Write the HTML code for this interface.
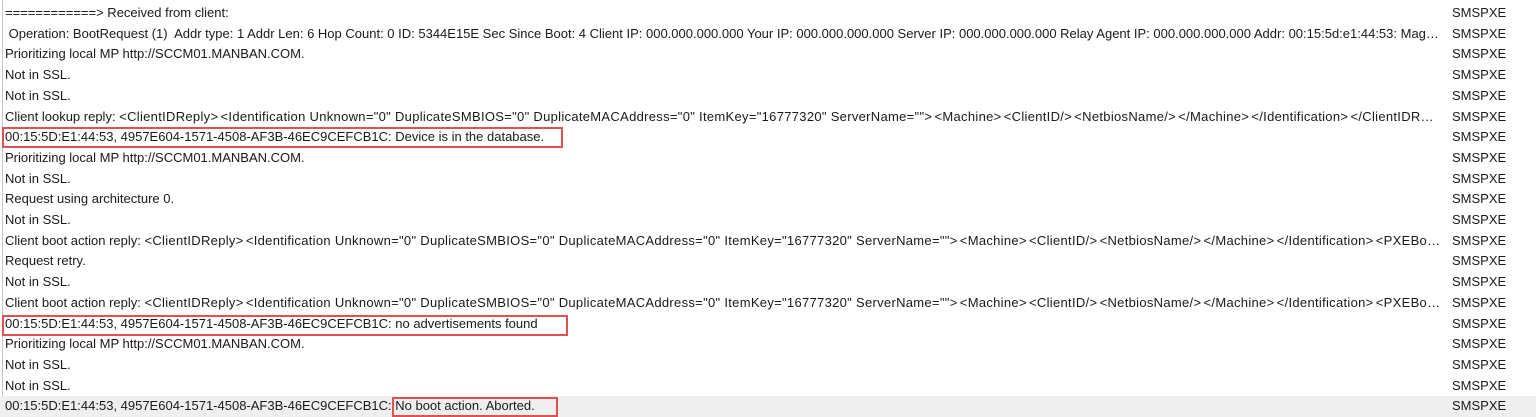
<!DOCTYPE html>
<html><head><meta charset="utf-8"><style>
body{margin:0;width:1536px;height:415px;background:#fff;overflow:hidden;position:relative;font-family:"Liberation Sans",sans-serif;font-size:13px;color:#1a1a1a}
.vl{position:absolute;left:2px;top:0;width:1px;height:415px;background:#c8c8c8}
.r{position:absolute;left:0;width:1536px;height:20.7px;line-height:20.7px;white-space:nowrap}
.t{position:absolute;left:5px;width:1436px;overflow:hidden;text-overflow:ellipsis}
.c{position:absolute;left:1452px}
.x{letter-spacing:0.3px}
.b{letter-spacing:2.5px}
.sel{background:#efefef}
.box{position:absolute;border:2px solid #e05252;box-sizing:border-box}
</style></head><body>
<div class="vl"></div>
<div class="r" style="top:3px"><span class="t">============&gt; Received from client:</span><span class="c">SMSPXE</span></div>
<div class="r" style="top:23.7px"><span class="t">&nbsp;Operation: BootRequest (1)&nbsp; Addr type: 1 Addr Len: 6 Hop Count: 0 ID: 5344E15E Sec Since Boot: 4 Client IP: 000.000.000.000 Your IP: 000.000.000.000 Server IP: 000.000.000.000 Relay Agent IP: 000.000.000.000 Addr: 00:15:5d:e1:44:53: Magic Cookie: 63825363</span><span class="c">SMSPXE</span></div>
<div class="r" style="top:44.4px"><span class="t">Prioritizing local MP http://SCCM01.MANBAN.COM.</span><span class="c">SMSPXE</span></div>
<div class="r" style="top:65.1px"><span class="t">Not in SSL.</span><span class="c">SMSPXE</span></div>
<div class="r" style="top:85.8px"><span class="t">Not in SSL.</span><span class="c">SMSPXE</span></div>
<div class="r" style="top:106.5px"><span class="t">Client lookup reply: <span class="x">&lt;ClientIDReply<span class="b">&gt;</span>&lt;Identification Unknown="0" DuplicateSMBIOS="0" DuplicateMACAddress="0" ItemKey="16777320" ServerName=""<span class="b">&gt;</span>&lt;Machine<span class="b">&gt;</span>&lt;ClientID/<span class="b">&gt;</span>&lt;NetbiosName/<span class="b">&gt;</span>&lt;/Machine<span class="b">&gt;</span>&lt;/Identification<span class="b">&gt;</span>&lt;/ClientIDReply&gt;</span></span><span class="c">SMSPXE</span></div>
<div class="r" style="top:127.2px"><span class="t">00:15:5D:E1:44:53, 4957E604-1571-4508-AF3B-46EC9CEFCB1C: Device is in the database.</span><span class="c">SMSPXE</span></div>
<div class="r" style="top:147.9px"><span class="t">Prioritizing local MP http://SCCM01.MANBAN.COM.</span><span class="c">SMSPXE</span></div>
<div class="r" style="top:168.6px"><span class="t">Not in SSL.</span><span class="c">SMSPXE</span></div>
<div class="r" style="top:189.3px"><span class="t">Request using architecture 0.</span><span class="c">SMSPXE</span></div>
<div class="r" style="top:210px"><span class="t">Not in SSL.</span><span class="c">SMSPXE</span></div>
<div class="r" style="top:230.7px"><span class="t">Client boot action reply: <span class="x">&lt;ClientIDReply<span class="b">&gt;</span>&lt;Identification Unknown="0" DuplicateSMBIOS="0" DuplicateMACAddress="0" ItemKey="16777320" ServerName=""<span class="b">&gt;</span>&lt;Machine<span class="b">&gt;</span>&lt;ClientID/<span class="b">&gt;</span>&lt;NetbiosName/<span class="b">&gt;</span>&lt;/Machine<span class="b">&gt;</span>&lt;/Identification<span class="b">&gt;</span>&lt;PXEBootAction&gt;</span></span><span class="c">SMSPXE</span></div>
<div class="r" style="top:251.4px"><span class="t">Request retry.</span><span class="c">SMSPXE</span></div>
<div class="r" style="top:272.1px"><span class="t">Not in SSL.</span><span class="c">SMSPXE</span></div>
<div class="r" style="top:292.8px"><span class="t">Client boot action reply: <span class="x">&lt;ClientIDReply<span class="b">&gt;</span>&lt;Identification Unknown="0" DuplicateSMBIOS="0" DuplicateMACAddress="0" ItemKey="16777320" ServerName=""<span class="b">&gt;</span>&lt;Machine<span class="b">&gt;</span>&lt;ClientID/<span class="b">&gt;</span>&lt;NetbiosName/<span class="b">&gt;</span>&lt;/Machine<span class="b">&gt;</span>&lt;/Identification<span class="b">&gt;</span>&lt;PXEBootAction&gt;</span></span><span class="c">SMSPXE</span></div>
<div class="r" style="top:313.5px"><span class="t">00:15:5D:E1:44:53, 4957E604-1571-4508-AF3B-46EC9CEFCB1C: no advertisements found</span><span class="c">SMSPXE</span></div>
<div class="r" style="top:334.2px"><span class="t">Prioritizing local MP http://SCCM01.MANBAN.COM.</span><span class="c">SMSPXE</span></div>
<div class="r" style="top:354.9px"><span class="t">Not in SSL.</span><span class="c">SMSPXE</span></div>
<div class="r" style="top:375.6px"><span class="t">Not in SSL.</span><span class="c">SMSPXE</span></div>
<div class="r sel" style="top:396.3px"><span class="t">00:15:5D:E1:44:53, 4957E604-1571-4508-AF3B-46EC9CEFCB1C: No boot action. Aborted.</span><span class="c">SMSPXE</span></div>
<div class="box" style="left:2px;top:127px;width:561px;height:21px"></div>
<div class="box" style="left:2px;top:315px;width:566px;height:21px"></div>
<div class="box" style="left:392px;top:397px;width:166px;height:20px"></div>
</body></html>
